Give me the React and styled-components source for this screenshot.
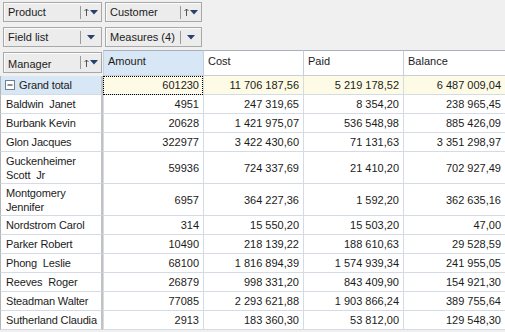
import React from "react";
import styled, { createGlobalStyle } from "styled-components";

const GlobalStyle = createGlobalStyle`
  html, body { margin: 0; padding: 0; background: #f0f0f0; }
  body {
    font-family: "Liberation Sans", Arial, sans-serif;
    font-size: 11px;
    color: #1b1b1b;
  }
`;

const COLS = "103px 100px 100px 100px 102px";

const Page = styled.div`
  width: 505px;
  height: 332px;
  overflow: hidden;
  box-sizing: border-box;
  padding-top: 2px;
  background: #f0f0f0;
`;

const Toolbar = styled.div`
  display: flex;
  gap: 3px;
  padding-left: 3px;
  margin-bottom: ${(p) => p.$after}px;
`;

const FieldButton = styled.div`
  box-sizing: border-box;
  width: ${(p) => p.$w}px;
  height: ${(p) => p.$h || 20}px;
  display: flex;
  align-items: center;
  border: 1px solid #a8a8a8;
  background: #ececec;
  box-shadow: inset 1px 1px 0 #fbfbfb;
`;

const Label = styled.span`
  flex: 1;
  padding-left: 4px;
  padding-top: ${(p) => (p.$low ? 2 : 0)}px;
  white-space: nowrap;
`;

const Divider = styled.span`
  width: 1px;
  height: 13px;
  background: #9a9a9a;
`;

const ArrowBox = styled.span`
  width: 20px;
  display: flex;
  align-items: center;
  justify-content: center;
  gap: 1px;
`;

const Grid = styled.div`
  display: grid;
  grid-template-columns: ${COLS};
`;

const Corner = styled.div`
  padding: 2px 0 0 3px;
  height: 26px;
  box-sizing: border-box;
`;

const HeadCell = styled.div`
  box-sizing: border-box;
  height: 26px;
  padding: 4px 0 0 4px;
  border-top: 1px solid #a9b0bb;
  border-left: 1px solid #c9cfd8;
  border-bottom: 1px solid #c9cfd8;
  background: ${(p) => (p.$active ? "#d8e7f6" : "#ffffff")};
`;

const RowHead = styled.div`
  box-sizing: border-box;
  height: ${(p) => p.$h}px;
  display: flex;
  align-items: center;
  gap: 4px;
  padding-left: ${(p) => (p.$total ? 4 : 5)}px;
  border-left: 1px solid #b5b5b5;
  border-right: 2px solid #c2c2c2;
  border-bottom: 1px solid #d5dbe5;
  background: ${(p) => (p.$total ? "#d8e7f6" : "#ffffff")};
  white-space: pre;
  line-height: 14px;
  letter-spacing: -0.15px;
  overflow: hidden;
`;

const Cell = styled.div`
  box-sizing: border-box;
  height: ${(p) => p.$h}px;
  display: flex;
  align-items: center;
  justify-content: flex-end;
  padding-right: 4px;
  border-left: 1px solid #d5dbe5;
  border-bottom: 1px solid #d5dbe5;
  background: ${(p) => (p.$total ? "#fdfbe5" : "#ffffff")};
  outline: ${(p) => (p.$focus ? "1px dotted #000" : "none")};
  outline-offset: -1px;
  white-space: nowrap;
`;

const SortArrows = ({ up = true }) => (
  <ArrowBox>
    {up && (
      <svg width="5" height="8" viewBox="0 0 5 8">
        <path d="M2.5 1 V8 M0.5 3 L2.5 1 L4.5 3" stroke="#555" strokeWidth="1" fill="none" />
      </svg>
    )}
    <svg width="8" height="5" viewBox="0 0 8 5">
      <path d="M0 0 H8 L4 4.5 Z" fill="#27406c" />
    </svg>
  </ArrowBox>
);

const MinusBox = () => (
  <svg width="10" height="10" viewBox="0 0 10 10">
    <rect x="0.5" y="0.5" width="9" height="9" fill="#ffffff" stroke="#6f7f94" />
    <path d="M2.5 5 H7.5" stroke="#222" strokeWidth="1" />
  </svg>
);

const Field = ({ label, w, up, h, low }) => (
  <FieldButton $w={w} $h={h}>
    <Label $low={low}>{label}</Label>
    <Divider />
    <SortArrows up={up} />
  </FieldButton>
);

const rows = [
  ["Baldwin  Janet", "4951", "247 319,65", "8 354,20", "238 965,45"],
  ["Burbank Kevin", "20628", "1 421 975,07", "536 548,98", "885 426,09"],
  ["Glon Jacques", "322977", "3 422 430,60", "71 131,63", "3 351 298,97"],
  ["Guckenheimer\nScott  Jr", "59936", "724 337,69", "21 410,20", "702 927,49"],
  ["Montgomery\nJennifer", "6957", "364 227,36", "1 592,20", "362 635,16"],
  ["Nordstrom Carol", "314", "15 550,20", "15 503,20", "47,00"],
  ["Parker Robert", "10490", "218 139,22", "188 610,63", "29 528,59"],
  ["Phong  Leslie", "68100", "1 816 894,39", "1 574 939,34", "241 955,05"],
  ["Reeves  Roger", "26879", "998 331,20", "843 409,90", "154 921,30"],
  ["Steadman Walter", "77085", "2 293 621,88", "1 903 866,24", "389 755,64"],
  ["Sutherland Claudia", "2913", "183 360,30", "53 812,00", "129 548,30"],
];

const total = ["601230", "11 706 187,56", "5 219 178,52", "6 487 009,04"];

export default function App() {
  return (
    <Page>
      <GlobalStyle />
      <Toolbar $after={5}>
        <Field label="Product" w={99} />
        <Field label="Customer" w={97} />
      </Toolbar>
      <Toolbar $after={3}>
        <Field label="Field list" w={99} up={false} />
        <Field label="Measures (4)" w={97} up={false} />
      </Toolbar>
      <Grid>
        <Corner>
          <Field label="Manager" w={99} h={21} low />
        </Corner>
        <HeadCell $active>Amount</HeadCell>
        <HeadCell>Cost</HeadCell>
        <HeadCell>Paid</HeadCell>
        <HeadCell>Balance</HeadCell>

        <RowHead $h={19} $total>
          <MinusBox />
          Grand total
        </RowHead>
        {total.map((v, i) => (
          <Cell key={i} $h={19} $total $focus={i === 0}>
            {v}
          </Cell>
        ))}

        {rows.map(([name, ...vals]) => {
          const h = name.includes("\n") ? 32 : 19;
          return (
            <React.Fragment key={name}>
              <RowHead $h={h}>{name}</RowHead>
              {vals.map((v, i) => (
                <Cell key={i} $h={h}>
                  {v}
                </Cell>
              ))}
            </React.Fragment>
          );
        })}
      </Grid>
    </Page>
  );
}
